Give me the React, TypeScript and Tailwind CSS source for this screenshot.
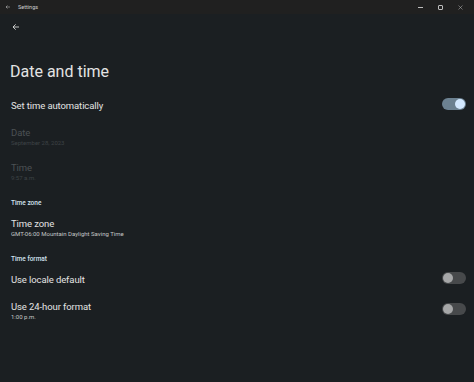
import React from "react";

const Toggle = ({ on }: { on: boolean }) => (
  <div
    className={`mb-[4px] flex h-[12px] w-[24px] shrink-0 items-center rounded-full px-[1px] ${
      on ? "justify-end bg-[#6c8191]" : "justify-start bg-[#47494b]"
    }`}
  >
    <div className={`h-[10px] w-[10px] rounded-full ${on ? "bg-[#d3e8ff]" : "bg-[#a6a7a8]"}`} />
  </div>
);

const Header = ({ children }: { children: React.ReactNode }) => (
  <div className="px-[11px] pt-[9px] pb-[4px] text-[6.5px] leading-[8px] font-medium text-[#d2e2ef]">
    {children}
  </div>
);

const Item = ({
  title,
  summary,
  disabled,
  toggle,
}: {
  title: string;
  summary?: string;
  disabled?: boolean;
  toggle?: boolean;
}) => (
  <div className={`flex items-center pr-[8px] pl-[11px] ${summary ? "h-[35px]" : "h-[27px]"}`}>
    <div className="flex-1">
      <div
        className={`text-[9.5px] leading-[12px] tracking-[-0.1px] ${
          disabled ? "text-[#4c5154]" : "text-[#e3e3e3]"
        }`}
      >
        {title}
      </div>
      {summary && (
        <div className={`text-[6px] leading-[8px] ${disabled ? "text-[#3e4346]" : "text-[#c5c7c6]"}`}>{summary}</div>
      )}
    </div>
    {toggle !== undefined && <Toggle on={toggle} />}
  </div>
);

export default function App() {
  return (
    <div className="h-[382px] w-[474px] overflow-hidden bg-[#1b1f22] font-['Roboto',sans-serif]">
      {/* window title bar */}
      <div className="flex h-[14px] items-center bg-[#202020] text-[#cfcfcf]">
        <svg className="ml-[5px] h-[6px] w-[6px]" viewBox="0 0 24 24" fill="none" stroke="currentColor" strokeWidth="2">
          <path d="M20 12H4M10 6l-6 6 6 6" />
        </svg>
        <span className="ml-[7px] text-[5.5px]">Settings</span>
        <div className="ml-auto flex items-center">
          <div className="flex w-[20px] justify-center">
            <div className="h-[1px] w-[5px] bg-[#bdbdbd]" />
          </div>
          <div className="flex w-[20px] justify-center">
            <div className="h-[5px] w-[5px] rounded-[1px] border border-[#bdbdbd]" />
          </div>
          <div className="mr-[4px] flex w-[20px] justify-center">
            <svg className="h-[5px] w-[5px]" viewBox="0 0 10 10" stroke="#bdbdbd" strokeWidth="1">
              <path d="M1 1l8 8M9 1l-8 8" />
            </svg>
          </div>
        </div>
      </div>

      {/* app bar */}
      <div className="flex h-[26px] items-center pl-[12px]">
        <svg className="h-[8px] w-[8px] text-[#e3e3e3]" viewBox="0 0 24 24" fill="none" stroke="currentColor" strokeWidth="2.5">
          <path d="M21 12H3M11 4l-8 8 8 8" />
        </svg>
      </div>

      <h1 className="mt-[22px] mb-[10.5px] px-[10px] text-[16px] leading-[20px] font-normal text-[#e3e3e3]">Date and time</h1>

      <Item title="Set time automatically" toggle={true} />
      <Item title="Date" summary="September 28, 2023" disabled />
      <Item title="Time" summary="9:57 a.m." disabled />
      <Header>Time zone</Header>
      <Item title="Time zone" summary="GMT-06:00 Mountain Daylight Saving Time" />
      <Header>Time format</Header>
      <Item title="Use locale default" toggle={false} />
      <Item title="Use 24-hour format" summary="1:00 p.m." toggle={false} />
    </div>
  );
}
